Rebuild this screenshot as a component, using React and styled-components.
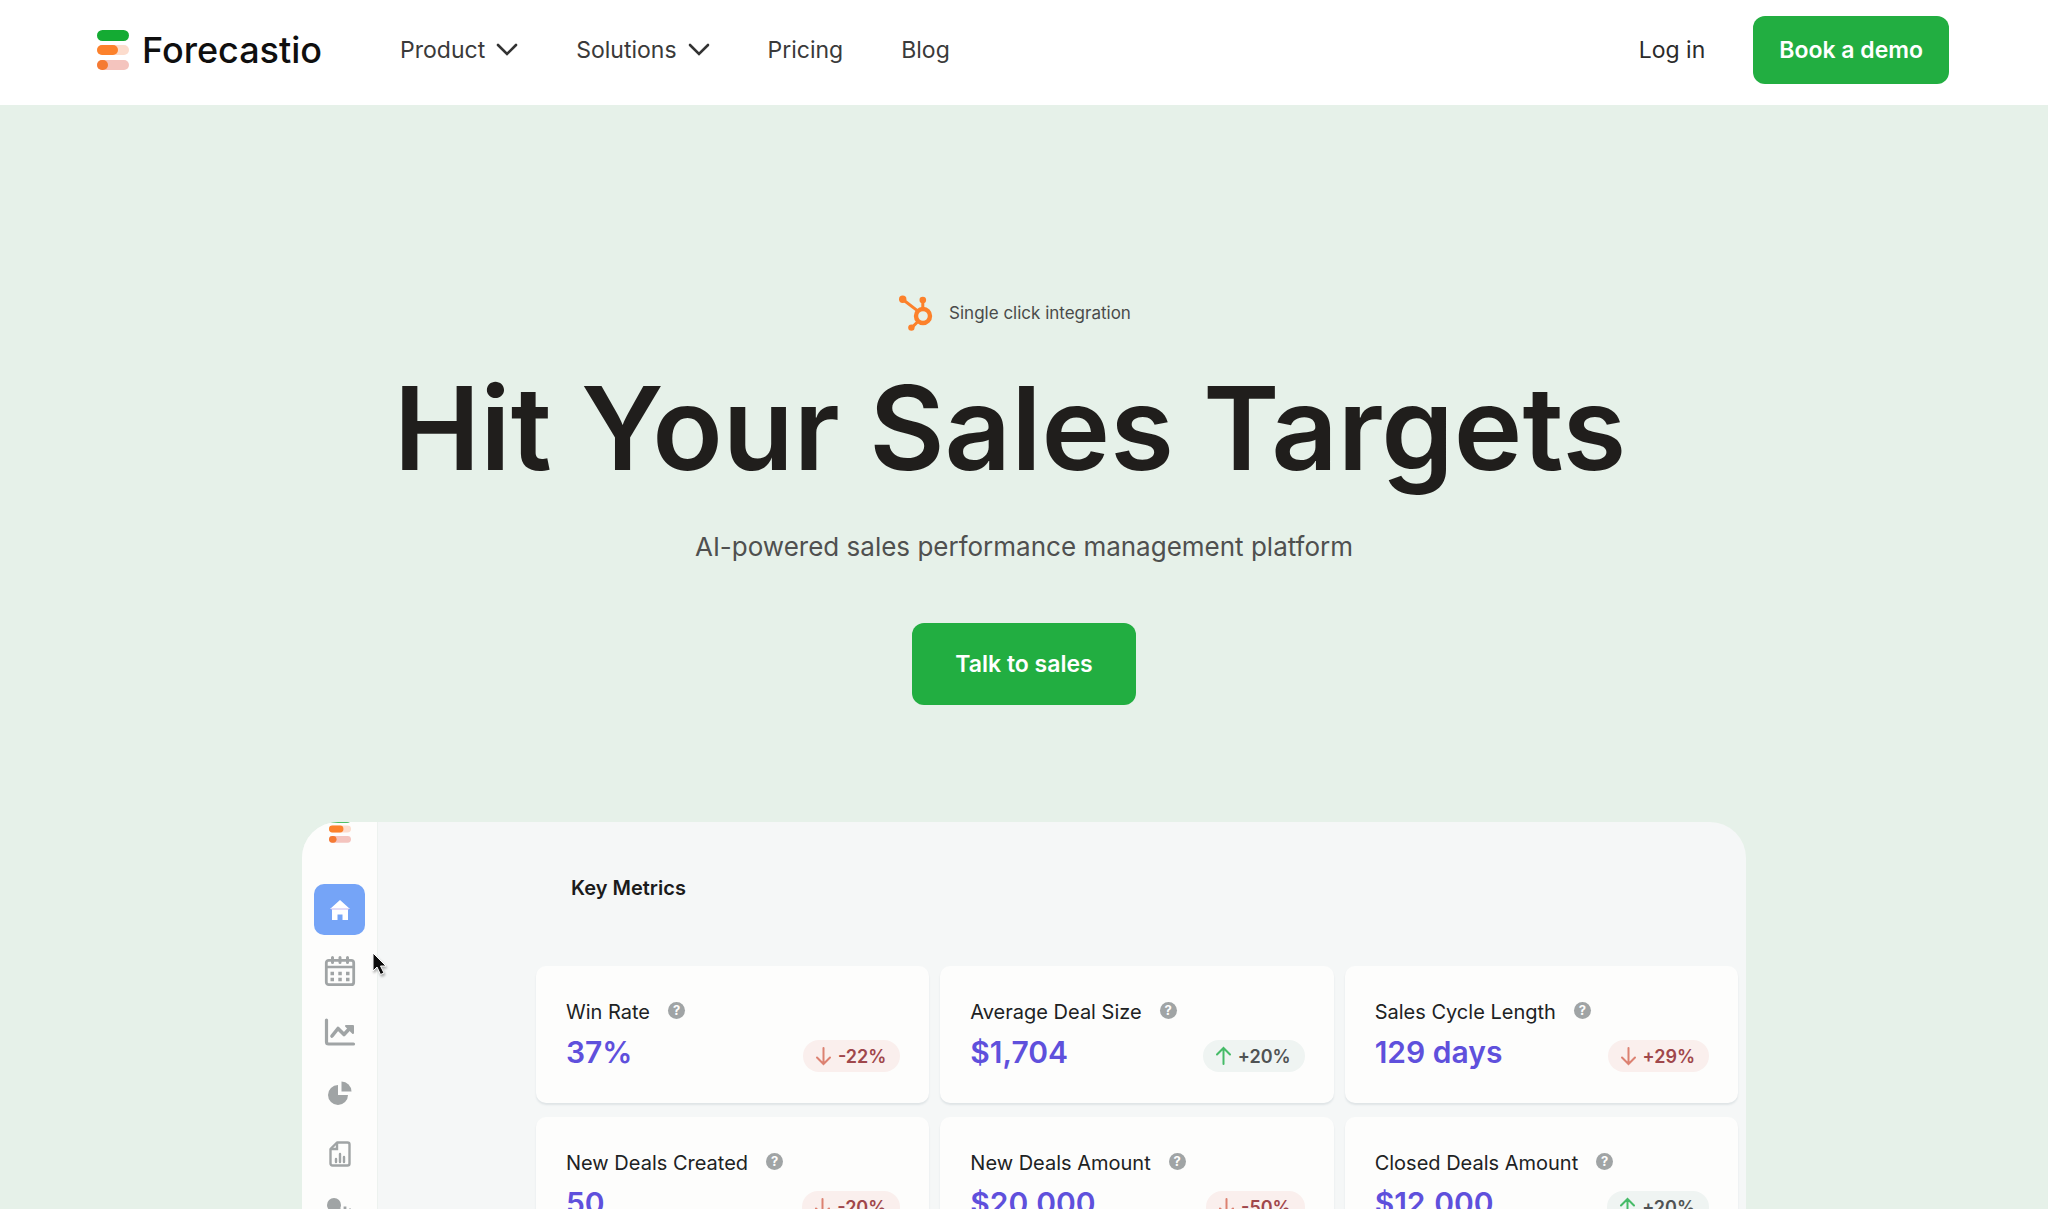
import React from 'react';
import styled, { createGlobalStyle, css } from 'styled-components';

const GlobalStyle = createGlobalStyle`
  *, *::before, *::after {
    box-sizing: border-box;
  }

  body {
    margin: 0;
    background: #e6f1e9;
    color: #201e1c;
    font-family: 'Inter', 'Liberation Sans', sans-serif;
  }

  a {
    color: inherit;
    text-decoration: none;
  }

  button {
    font-family: inherit;
    cursor: pointer;
  }
`;

const Page = styled.div`
  height: 100vh;
  overflow: hidden;
`;

const Header = styled.header`
  display: flex;
  align-items: center;
  justify-content: space-between;
  height: 105px;
  padding: 0 99px 6px 97px;
  background: #fff;
`;

const HeaderSide = styled.div`
  display: flex;
  align-items: center;
  gap: ${({ $gap }) => $gap}px;
`;

const Brand = styled.a`
  display: flex;
  align-items: center;
  gap: 13px;
  color: #0f0f0f;
  font-size: 36px;
  font-weight: 500;
  line-height: 44px;
`;

const Nav = styled.nav`
  display: flex;
  align-items: center;
  gap: 58px;
`;

const NavItem = styled.a`
  display: flex;
  align-items: center;
  gap: 11px;
  color: #3a3a3a;
  font-size: 23px;
  line-height: 32px;
`;

const LoginLink = styled.a`
  color: #2b2b2b;
  font-size: 23px;
  line-height: 32px;
`;

const Button = styled.button`
  border: 0;
  border-radius: 12px;
  background: #22ae41;
  color: #fff;
  font-size: 23px;
  font-weight: 600;
  line-height: 32px;
  padding: 18px 26px;

  ${({ $large }) =>
    $large &&
    css`
      padding: 25px 43px;
    `}
`;

const Hero = styled.main`
  display: flex;
  flex-direction: column;
  align-items: center;
  padding: 190px 32px 0;
`;

const Integration = styled.div`
  display: flex;
  align-items: center;
  gap: 16px;
  margin-right: 18px;
  color: #4a4b4a;
  font-size: 17px;
  line-height: 36px;
`;

const Title = styled.h1`
  margin: 27px 0 0;
  padding-right: 28px;
  font-size: 116px;
  font-weight: 600;
  line-height: 140px;
  text-align: center;
`;

const Subtitle = styled.p`
  margin: 31px 0 58px;
  color: #4f504f;
  font-size: 26px;
  line-height: 36px;
  text-align: center;
`;

const Panel = styled.section`
  position: relative;
  display: flex;
  width: 100%;
  max-width: 1444px;
  margin-top: 117px;
  border-radius: 36px 36px 0 0;
  background: #f5f7f7;
  overflow: hidden;
`;

const Sidebar = styled.nav`
  display: flex;
  flex-direction: column;
  flex: none;
  align-items: center;
  gap: 10px;
  width: 76px;
  border-right: 1px solid #edf2ef;
  background: #fdfdfc;
`;

const SidebarBrand = styled.a`
  height: 28px;
  margin: -7px 0 31px;
`;

const SidebarLink = styled.a`
  display: flex;
  align-items: center;
  justify-content: center;
  width: 51px;
  height: 51px;
  border-radius: 10px;
  background: ${({ $active }) => ($active ? '#75a4f7' : 'transparent')};
  color: ${({ $active }) => ($active ? '#fff' : '#a0a4a5')};
`;

const Pointer = styled.svg`
  position: absolute;
  top: 130px;
  left: 70px;
  filter: drop-shadow(1px 2px 1px rgba(0, 0, 0, 0.3));
`;

const Metrics = styled.div`
  flex: 1;
  padding: 52px 8px 0 158px;
`;

const MetricsTitle = styled.h2`
  margin: 0 0 64px 35px;
  color: #1b1b1b;
  font-size: 20px;
  font-weight: 600;
  line-height: 28px;
`;

const CardGrid = styled.div`
  display: grid;
  grid-template-columns: repeat(3, 1fr);
  gap: 14px 11px;
`;

const Card = styled.article`
  display: flex;
  flex-direction: column;
  height: 137px;
  padding: 32px 29px 0 30px;
  border-radius: 10px;
  background: #fdfdfc;
  box-shadow: 0 2px 2px #dfe4e6;
`;

const CardTitle = styled.h3`
  display: flex;
  align-items: center;
  gap: 18px;
  margin: 0;
  color: #202223;
  font-size: 20px;
  font-weight: 400;
  line-height: 28px;
`;

const CardBody = styled.div`
  display: flex;
  align-items: flex-end;
  justify-content: space-between;
  height: 46px;
`;

const Value = styled.strong`
  color: #5f50dc;
  font-size: 30px;
  font-weight: 600;
  line-height: 40px;
`;

const Change = styled.span`
  display: flex;
  align-items: center;
  gap: 6px;
  height: 32px;
  padding: 0 14px 0 12px;
  border-radius: 16px;
  background: ${({ $good }) => ($good ? '#eff4f2' : '#faefed')};
  color: ${({ $good }) => ($good ? '#505354' : '#a0474b')};
  font-size: 18px;
  font-weight: 600;
`;

const HelpBadge = styled.button`
  display: flex;
  align-items: center;
  justify-content: center;
  width: 17px;
  height: 17px;
  margin-bottom: 4px;
  padding: 0;
  border: 0;
  border-radius: 50%;
  background: #a0a4a5;
  color: #fdfdfc;
  font-size: 13px;
  font-weight: 700;
  line-height: 17px;
`;

const LogoMark = ({ width, height }) => (
  <svg width={width} height={height} viewBox="0 0 32 40" aria-hidden="true">
    <rect width="32" height="11" rx="5.5" fill="#14ab33" />
    <rect y="15" width="32" height="10" rx="5" fill="#fcdccd" />
    <rect y="15" width="21" height="10" rx="5" fill="#fc812b" />
    <rect y="30" width="32" height="10" rx="5" fill="#f4c4be" />
    <rect y="30" width="11" height="10" rx="5" fill="#f57a33" />
  </svg>
);

const Chevron = () => (
  <svg width="22" height="14" viewBox="0 0 22 14" fill="none" aria-hidden="true">
    <path d="M2 2l9 9 9-9" stroke="#333" strokeWidth="2.6" strokeLinecap="round" />
  </svg>
);

const HubspotIcon = () => (
  <svg width="34" height="36" viewBox="0 0 34 36" fill="none" stroke="#fc812b" aria-hidden="true">
    <circle cx="24" cy="21" r="7" strokeWidth="4.4" />
    <path d="M3.5 4.2L18 15.4M23.8 5v8M19 26.5l-6.5 6.3" strokeWidth="3" />
    <g fill="#fc812b" stroke="none">
      <circle cx="3.7" cy="4.2" r="3.7" />
      <circle cx="23.8" cy="5" r="3.3" />
      <circle cx="12.4" cy="32.6" r="3.2" />
    </g>
  </svg>
);

const HomeIcon = () => (
  <svg width="20" height="22" viewBox="0 0 20 22" aria-hidden="true">
    <path
      d="M10 1L20 10h-2v10.5q0 .5-.5.5h-5v-5.500h-5V21h-5q-.5 0-.5-.5V10H0z"
      fill="currentColor"
    />
    <path d="M1 10h18" stroke="#c5b8f0" />
  </svg>
);

const CalendarIcon = () => (
  <svg width="32" height="32" viewBox="0 0 32 32" fill="none" stroke="currentColor" aria-hidden="true">
    <rect x="2.3" y="5.3" width="27.4" height="24.4" rx="2.5" strokeWidth="2.8" />
    <path d="M2 12h28" strokeWidth="2.4" />
    <path d="M8.5 2.5v5M16 2.5v5M23.5 2.5v5" strokeWidth="3" strokeLinecap="round" />
    <path
      d="M6.500 18.5h3.500M14.300 18.5h3.500M22 18.5h3.500M6.500 24.500h3.500M14.300 24.500h3.500M22 24.500h3.500"
      strokeWidth="3.5"
    />
  </svg>
);

const TrendIcon = () => (
  <svg
    width="32"
    height="30"
    viewBox="0 0 32 30"
    fill="none"
    stroke="currentColor"
    strokeLinecap="round"
    aria-hidden="true"
  >
    <path d="M2.5 3v22q0 2 2 2h25" strokeWidth="3.2" />
    <path d="M8 19l6-7.5 6 6 6-6.5" strokeWidth="3.6" strokeLinejoin="round" />
    <path d="M22 9h7v7z" fill="currentColor" strokeWidth="2" strokeLinejoin="round" />
  </svg>
);

const PieIcon = () => (
  <svg width="24" height="24" viewBox="0 0 24 24" fill="currentColor" aria-hidden="true">
    <path d="M10 4v10h10A10 10 0 1 1 10 4z" />
    <path d="M13.5.5a10 10 0 0 1 10 10h-10z" />
  </svg>
);

const ReportIcon = () => (
  <svg width="22" height="26" viewBox="0 0 22 26" fill="none" stroke="currentColor" aria-hidden="true">
    <path
      d="M8 1.5h10.5q2 0 2 2v19q0 2-2 2h-15q-2 0-2-2V8z"
      strokeWidth="2.4"
      strokeLinejoin="round"
    />
    <path d="M8 2v6H2" strokeWidth="2.4" />
    <path d="M7 21v-3M11 21v-8M15 21v-5" strokeWidth="2.4" strokeLinecap="round" />
  </svg>
);

const TeamIcon = () => (
  <svg width="26" height="36" viewBox="0 0 26 36" fill="currentColor" aria-hidden="true">
    <circle cx="7" cy="8" r="7" />
    <path d="M0 24q0-8 7-8h4v12H0z" />
    <circle cx="18" cy="18" r="6" />
    <path
      d="M18 9.5v17M9.5 18h17M12 12l12 12M24 12L12 24"
      stroke="currentColor"
      strokeWidth="2.8"
    />
  </svg>
);

const Arrow = ({ up }) => (
  <svg
    width="17"
    height="20"
    viewBox="0 0 17 20"
    fill="none"
    stroke={up ? '#46bb68' : '#dc8171'}
    strokeWidth="2"
    strokeLinecap="round"
    aria-hidden="true"
  >
    <path d={up ? 'M8.5 18V2M2 8.500L8.500 2 15 8.500' : 'M8.5 2v16M2 11.500L8.500 18 15 11.500'} />
  </svg>
);

const navItems = [
  { label: 'Product', menu: true },
  { label: 'Solutions', menu: true },
  { label: 'Pricing' },
  { label: 'Blog' },
];

const sidebarItems = [
  { label: 'Home', icon: HomeIcon, active: true },
  { label: 'Calendar', icon: CalendarIcon },
  { label: 'Trends', icon: TrendIcon },
  { label: 'Breakdown', icon: PieIcon },
  { label: 'Reports', icon: ReportIcon },
  { label: 'Team', icon: TeamIcon },
];

const metrics = [
  { title: 'Win Rate', value: '37%', change: '-22%' },
  { title: 'Average Deal Size', value: '$1,704', change: '+20%', up: true },
  { title: 'Sales Cycle Length', value: '129 days', change: '+29%' },
  { title: 'New Deals Created', value: '50', change: '-20%' },
  { title: 'New Deals Amount', value: '$20,000', change: '-50%' },
  { title: 'Closed Deals Amount', value: '$12,000', change: '+20%', up: true },
];

const MetricCard = ({ title, value, change, up }) => (
  <Card>
    <CardTitle>
      {title}
      <HelpBadge type="button" aria-label={`About ${title}`}>
        ?
      </HelpBadge>
    </CardTitle>
    <CardBody>
      <Value>{value}</Value>
      <Change $good={up}>
        <Arrow up={up} />
        {change}
      </Change>
    </CardBody>
  </Card>
);

const App = () => (
  <>
    <GlobalStyle />
    <Page>
      <Header>
        <HeaderSide $gap={78}>
          <Brand href="#">
            <LogoMark width={32} height={40} />
            Forecastio
          </Brand>
          <Nav>
            {navItems.map(({ label, menu }) => (
              <NavItem href="#" key={label}>
                {label}
                {menu && <Chevron />}
              </NavItem>
            ))}
          </Nav>
        </HeaderSide>
        <HeaderSide $gap={48}>
          <LoginLink href="#">Log in</LoginLink>
          <Button type="button">Book a demo</Button>
        </HeaderSide>
      </Header>
      <Hero>
        <Integration>
          <HubspotIcon />
          Single click integration
        </Integration>
        <Title>Hit Your Sales Targets</Title>
        <Subtitle>AI-powered sales performance management platform</Subtitle>
        <Button type="button" $large>
          Talk to sales
        </Button>
        <Panel>
          <Sidebar>
            <SidebarBrand href="#" aria-label="Dashboard">
              <LogoMark width={22} height={28} />
            </SidebarBrand>
            {sidebarItems.map(({ label, icon: Icon, active }) => (
              <SidebarLink href="#" key={label} aria-label={label} $active={active}>
                <Icon />
              </SidebarLink>
            ))}
          </Sidebar>
          <Metrics>
            <MetricsTitle>Key Metrics</MetricsTitle>
            <CardGrid>
              {metrics.map((metric) => (
                <MetricCard key={metric.title} {...metric} />
              ))}
            </CardGrid>
          </Metrics>
          <Pointer width="18" height="25" viewBox="0 0 18 25" aria-hidden="true">
            <path d="M1 1v18l4-4 3.5 7.5L12 21l-3.500-7H14z" fill="#0c0c0c" stroke="#fff" />
          </Pointer>
        </Panel>
      </Hero>
    </Page>
  </>
);

export default App;
